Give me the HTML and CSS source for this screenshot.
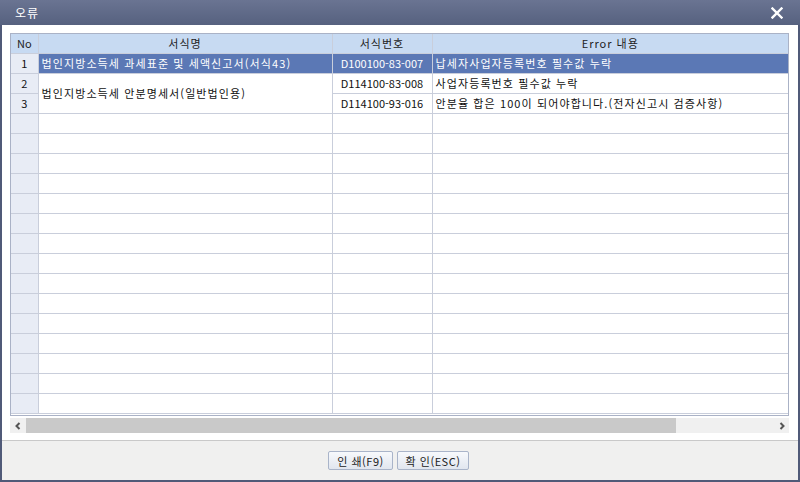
FILE: index.html
```html
<!DOCTYPE html>
<html lang="ko">
<head>
<meta charset="utf-8">
<title>오류</title>
<link rel="stylesheet" href="styles.css">
</head>
<body>
<div class="dialog">
  <div class="titlebar">
    <span class="title">오류</span>
    <span class="close"><svg width="12" height="12" viewBox="0 0 12 12"><path d="M1.5 1.5 L10.5 10.5 M10.5 1.5 L1.5 10.5" stroke="#fff" stroke-width="2.4" stroke-linecap="square"/></svg></span>
  </div>
  <div class="content">
    <div class="grid">
      <table>
        <colgroup>
          <col class="c-no"><col class="c-name"><col class="c-code"><col class="c-err">
        </colgroup>
        <thead>
          <tr><th class="h-no">No</th><th>서식명</th><th>서식번호</th><th>Error 내용</th></tr>
        </thead>
        <tbody>
          <tr class="sel"><td class="no">1</td><td class="name">법인지방소득세 과세표준 및 세액신고서(서식43)</td><td class="code">D100100-83-007</td><td class="err">납세자사업자등록번호 필수값 누락</td></tr>
          <tr><td class="no">2</td><td class="name" rowspan="2">법인지방소득세 안분명세서(일반법인용)</td><td class="code">D114100-83-008</td><td class="err">사업자등록번호 필수값 누락</td></tr>
          <tr><td class="no">3</td><td class="code">D114100-93-016</td><td class="err">안분율 합은 100이 되어야합니다.(전자신고시 검증사항)</td></tr>
          <tr><td class="no"></td><td></td><td></td><td></td></tr>
          <tr><td class="no"></td><td></td><td></td><td></td></tr>
          <tr><td class="no"></td><td></td><td></td><td></td></tr>
          <tr><td class="no"></td><td></td><td></td><td></td></tr>
          <tr><td class="no"></td><td></td><td></td><td></td></tr>
          <tr><td class="no"></td><td></td><td></td><td></td></tr>
          <tr><td class="no"></td><td></td><td></td><td></td></tr>
          <tr><td class="no"></td><td></td><td></td><td></td></tr>
          <tr><td class="no"></td><td></td><td></td><td></td></tr>
          <tr><td class="no"></td><td></td><td></td><td></td></tr>
          <tr><td class="no"></td><td></td><td></td><td></td></tr>
          <tr><td class="no"></td><td></td><td></td><td></td></tr>
          <tr><td class="no"></td><td></td><td></td><td></td></tr>
          <tr><td class="no"></td><td></td><td></td><td></td></tr>
          <tr><td class="no"></td><td></td><td></td><td></td></tr>
        </tbody>
      </table>
    </div>
    <div class="hscroll">
      <span class="sbtn"><svg width="8" height="8" viewBox="0 0 8 8"><path d="M5.5 1 L2.5 4 L5.5 7" fill="none" stroke="#555" stroke-width="2"/></svg></span>
      <span class="thumb"></span>
      <span class="track"></span>
      <span class="sbtn"><svg width="8" height="8" viewBox="0 0 8 8"><path d="M2.5 1 L5.5 4 L2.5 7" fill="none" stroke="#555" stroke-width="2"/></svg></span>
    </div>
  </div>
  <div class="footer">
    <button class="btn">인 쇄(F9)</button>
    <button class="btn">확 인(ESC)</button>
  </div>
</div>
</body>
</html>
```

FILE: styles.css
```css
* { box-sizing: border-box; }
html, body { margin: 0; padding: 0; }
body {
  width: 800px;
  height: 482px;
  overflow: hidden;
  font-family: "Noto Sans CJK KR", "Noto Sans", sans-serif;
  font-size: 11px;
  color: #111;
}
.dialog {
  width: 800px;
  height: 482px;
  display: flex;
  flex-direction: column;
  background: #fff;
  border-left: 2px solid #505a78;
  border-right: 2px solid #505a78;
  border-bottom: 2px solid #505a78;
}
.titlebar {
  height: 25px;
  flex: none;
  display: flex;
  align-items: center;
  justify-content: space-between;
  padding: 0 17px 0 15px;
  margin: 0 -2px;
  background: linear-gradient(#6a7492, #56617f);
  color: #fff;
}
.title { font-size: 12px; letter-spacing: 1px; }
.close { display: flex; width: 12px; height: 12px; }
.content {
  flex: none;
  height: 416px;
  padding: 8px 9px 0 8px;
  background: #fff;
  border-bottom: 1px solid #c9c9c9;
}
.grid {
  border: 1px solid #aab2c6;
  height: 383px;
  overflow: hidden;
}
table {
  border-collapse: collapse;
  table-layout: fixed;
  width: 777px;
}
.c-no { width: 27px; }
.c-name { width: 294px; }
.c-code { width: 100px; }
.c-err { width: 356px; }
th, td {
  border: 1px solid #c9cedb;
  padding: 0 3px;
  height: 20px;
  line-height: 18px;
  white-space: pre;
  overflow: hidden;
  font-weight: normal;
}
thead tr th { border-top: none; }
tr > :first-child { border-left: none; }
tr > :last-child { border-right: none; }
th {
  height: 19px;
  background: #c7daf2;
  text-align: center;
  color: #222;
  letter-spacing: 1px;
}
th.h-no { letter-spacing: 0; padding: 0; }
td.no {
  background: #e8ecf5;
  text-align: center;
}
td.name, td.err { letter-spacing: 1.1px; }
td.code { text-align: center; }
tr.sel td:not(.no) { background: #5b78b5; color: #fff; }
.hscroll {
  display: flex;
  height: 15px;
  margin-top: 2px;
  background: #f0f0f0;
}
.sbtn {
  width: 15px;
  flex: none;
  display: flex;
  align-items: center;
  justify-content: center;
}
.thumb {
  width: 650px;
  flex: none;
  margin-left: 1px;
  background: #c9c9c9;
}
.track { flex: 1; }
.footer {
  flex: 1;
  background: #f0f0ef;
  display: flex;
  justify-content: center;
  align-items: center;
  gap: 4px;
  padding-right: 3px;
}
.btn {
  height: 19px;
  padding: 0 7px;
  font-family: inherit;
  font-size: 11px;
  color: #222;
  background: linear-gradient(#f7f9fc, #e1e6ef);
  border: 1px solid #a9b4c9;
  border-radius: 2px;
  line-height: 16px;
  letter-spacing: 0.5px;
}
.btn:first-child { width: 65px; }
.btn:last-child { width: 72px; }
```
